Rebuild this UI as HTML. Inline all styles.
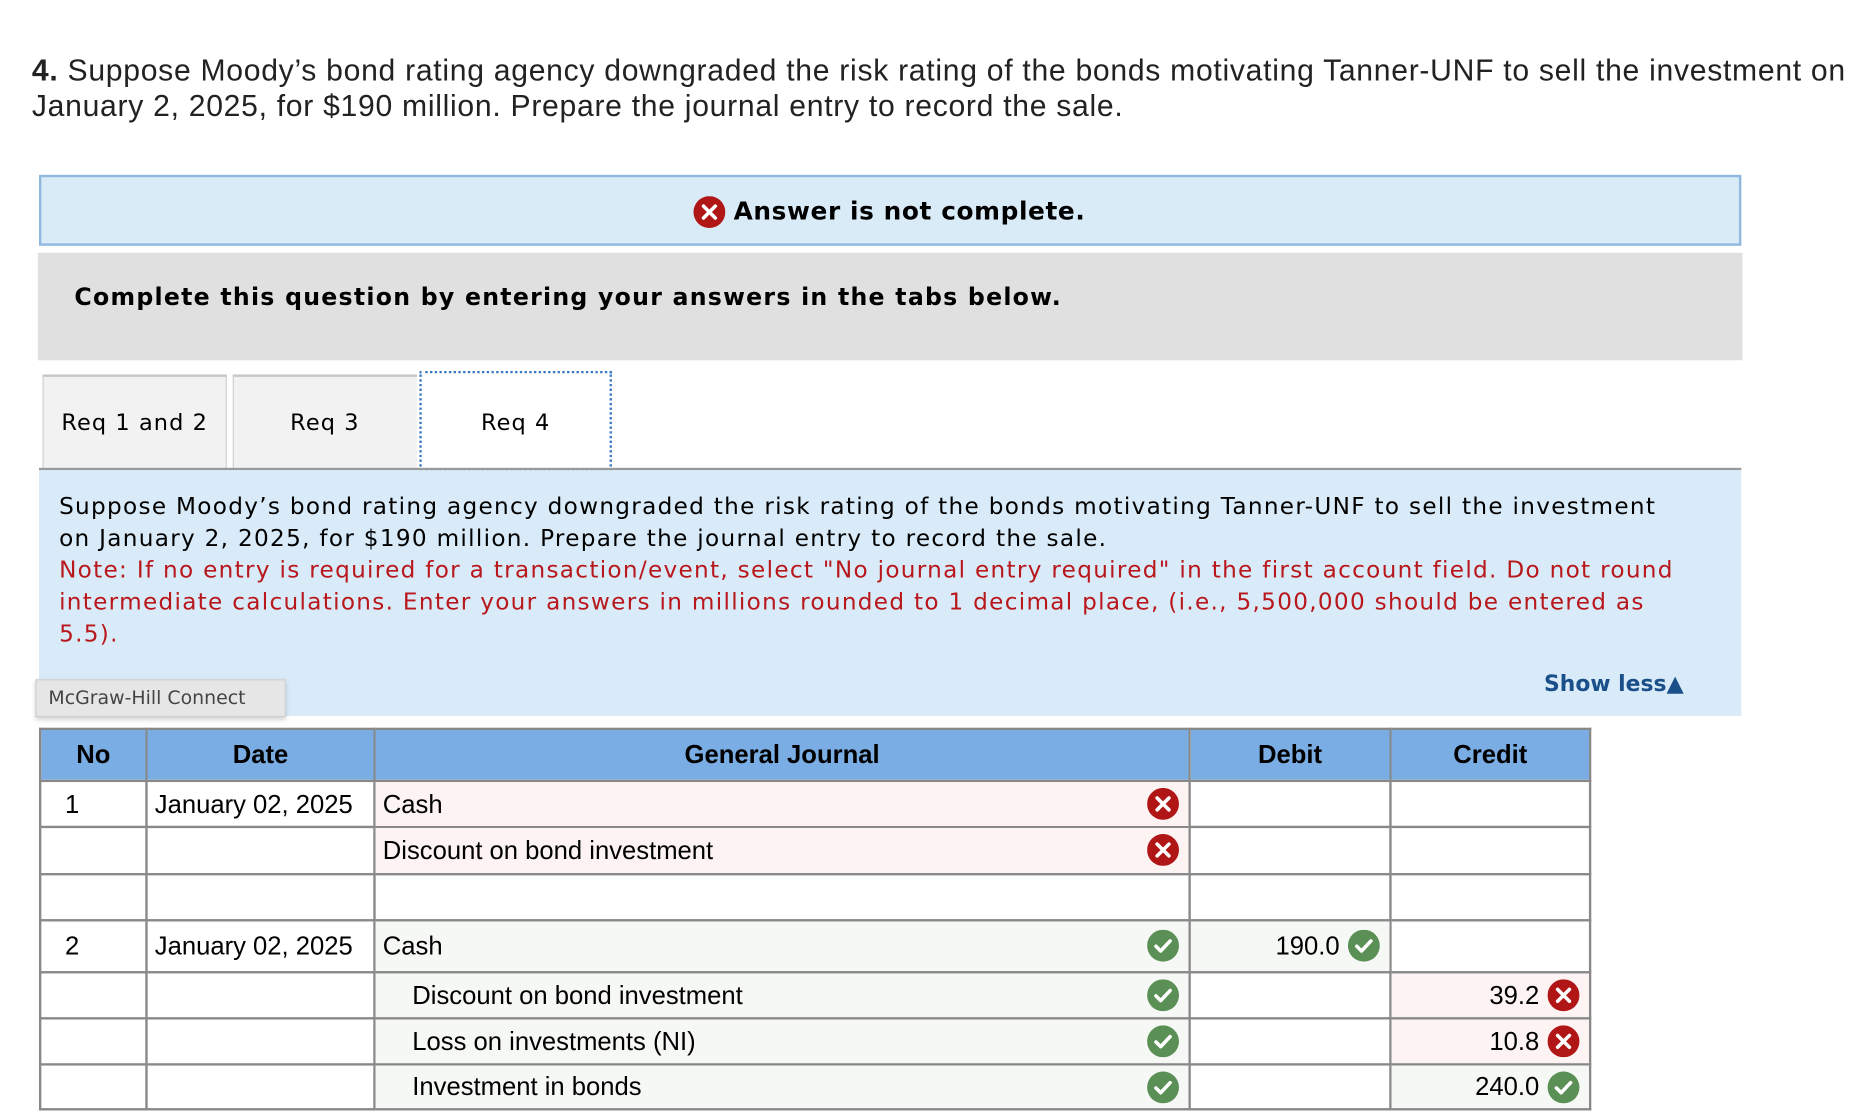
<!DOCTYPE html>
<html><head><meta charset="utf-8">
<style>
html,body{margin:0;padding:0;background:#fff;width:1850px;height:1114px;overflow:hidden}
#w{position:absolute;left:0;top:0;width:1566px;height:943px;transform:scale(1.18135);transform-origin:0 0}
.a{position:absolute;white-space:nowrap}
.v{font-family:"DejaVu Sans",Verdana,sans-serif}
.l{font-family:"Liberation Sans",Arial,sans-serif}
.ic{position:absolute;width:27px;height:27px}
table{position:absolute;left:33px;top:616px;border-collapse:collapse;table-layout:fixed;width:1312px;font-family:"Liberation Sans",Arial,sans-serif;font-size:21.7px;color:#000}
td,th{border:2px solid #888;padding:0 6px;position:relative;box-sizing:border-box;overflow:visible;white-space:nowrap}
th{background:#7aade3;font-weight:bold;text-align:center}
.p{background:#fdf3f3}.g{background:#f6f8f5}
.n{padding-left:20px}
</style></head><body><div id="w">
<div class="a l" style="left:27px;top:45px;font-size:25.5px;letter-spacing:0.6px;line-height:30px;color:#222"><b>4.</b> Suppose Moody’s bond rating agency downgraded the risk rating of the bonds motivating Tanner-UNF to sell the investment on<br>January 2, 2025, for $190 million. Prepare the journal entry to record the sale.</div>

<div class="a" style="left:33px;top:148px;width:1437px;height:56px;background:#daebf8;border:2px solid #8fb8de"></div>
<svg class="ic" style="left:587px;top:166px" viewBox="0 0 27 27"><circle cx="13.5" cy="13.5" r="13.5" fill="#b11616"/><path d="M8.5 8.5l10 10M18.5 8.5l-10 10" stroke="#fff" stroke-width="3" stroke-linecap="round"/></svg>
<div class="a v" style="left:621px;top:164px;font-size:21px;letter-spacing:0.5px;font-weight:bold;line-height:30px;color:#000">Answer is not complete.</div>

<div class="a" style="left:32px;top:214px;width:1443px;height:91px;background:#e0e0e0"></div>
<div class="a v" style="left:63px;top:237px;font-size:20px;letter-spacing:1.05px;font-weight:bold;line-height:28px;color:#000">Complete this question by entering your answers in the tabs below.</div>

<div class="a" style="left:36px;top:317px;width:156px;height:80px;background:#f2f2f2;border-top:2px solid #c6c6c6;border-left:1px solid #d0d0d0;border-right:1px solid #d0d0d0;box-sizing:border-box"></div>
<div class="a v" style="left:36px;top:344px;width:156px;text-align:center;font-size:19px;letter-spacing:0.9px;line-height:28px">Req 1 and 2</div>
<div class="a" style="left:197px;top:317px;width:156px;height:80px;background:#f2f2f2;border-top:2px solid #c6c6c6;border-left:1px solid #d0d0d0;box-sizing:border-box"></div>
<div class="a v" style="left:197px;top:344px;width:156px;text-align:center;font-size:19px;letter-spacing:0.9px;line-height:28px">Req 3</div>
<div class="a" style="left:355px;top:314px;width:163px;height:85px;background:#fff;border:2px dotted #3a78c4;box-sizing:border-box"></div>
<div class="a v" style="left:355px;top:344px;width:163px;text-align:center;font-size:19px;letter-spacing:0.9px;line-height:28px">Req 4</div>

<div class="a" style="left:33px;top:396px;width:1441px;height:2px;background:#999"></div>
<div class="a" style="left:33px;top:398px;width:1441px;height:208px;background:#d9ebf8"></div>
<div class="a v" style="left:50px;top:415px;font-size:19.6px;letter-spacing:1.1px;line-height:27px;color:#000">Suppose Moody’s bond rating agency downgraded the risk rating of the bonds motivating Tanner-UNF to sell the investment<br>on January 2, 2025, for $190 million. Prepare the journal entry to record the sale.<br><span style="color:#b8171c">Note: If no entry is required for a transaction/event, select "No journal entry required" in the first account field. Do not round<br>intermediate calculations. Enter your answers in millions rounded to 1 decimal place, (i.e., 5,500,000 should be entered as<br>5.5).</span></div>
<div class="a v" style="left:1307px;top:566px;font-size:18.5px;font-weight:bold;color:#1b4f8a;line-height:26px">Show less<span style="font-size:19px">▲</span></div>

<div class="a v" style="left:30px;top:575px;width:212px;height:32px;background:#e6e6e6;border:1px solid #cfcfcf;box-sizing:border-box;box-shadow:0 2px 4px rgba(0,0,0,.2);font-size:16px;color:#444;line-height:30px;padding-left:10px">McGraw-Hill Connect</div>

<table>
<colgroup><col style="width:90px"><col style="width:193px"><col style="width:690px"><col style="width:170px"><col style="width:169px"></colgroup>
<tr style="height:44px"><th>No</th><th>Date</th><th>General Journal</th><th>Debit</th><th>Credit</th></tr>
<tr style="height:39px"><td class="n">1</td><td>January 02, 2025</td><td class="p">Cash<svg class="ic" style="right:8px;top:5px" viewBox="0 0 27 27"><circle cx="13.5" cy="13.5" r="13.5" fill="#b11616"/><path d="M8.5 8.5l10 10M18.5 8.5l-10 10" stroke="#fff" stroke-width="3" stroke-linecap="round"/></svg></td><td></td><td></td></tr>
<tr style="height:40px"><td></td><td></td><td class="p">Discount on bond investment<svg class="ic" style="right:8px;top:5px" viewBox="0 0 27 27"><circle cx="13.5" cy="13.5" r="13.5" fill="#b11616"/><path d="M8.5 8.5l10 10M18.5 8.5l-10 10" stroke="#fff" stroke-width="3" stroke-linecap="round"/></svg></td><td></td><td></td></tr>
<tr style="height:39px"><td></td><td></td><td></td><td></td><td></td></tr>
<tr style="height:44px"><td class="n">2</td><td>January 02, 2025</td><td class="g">Cash<svg class="ic" style="right:8px;top:7px" viewBox="0 0 27 27"><circle cx="13.5" cy="13.5" r="13.5" fill="#5a8f55"/><path d="M7.5 14l4 4 8-8.5" stroke="#fff" stroke-width="3" fill="none" stroke-linecap="round" stroke-linejoin="round"/></svg></td><td class="g" style="text-align:right;padding-right:42px">190.0<svg class="ic" style="right:8px;top:7px" viewBox="0 0 27 27"><circle cx="13.5" cy="13.5" r="13.5" fill="#5a8f55"/><path d="M7.5 14l4 4 8-8.5" stroke="#fff" stroke-width="3" fill="none" stroke-linecap="round" stroke-linejoin="round"/></svg></td><td></td></tr>
<tr style="height:39px"><td></td><td></td><td class="g" style="padding-left:31px">Discount on bond investment<svg class="ic" style="right:8px;top:5px" viewBox="0 0 27 27"><circle cx="13.5" cy="13.5" r="13.5" fill="#5a8f55"/><path d="M7.5 14l4 4 8-8.5" stroke="#fff" stroke-width="3" fill="none" stroke-linecap="round" stroke-linejoin="round"/></svg></td><td></td><td class="p" style="text-align:right;padding-right:42px">39.2<svg class="ic" style="right:8px;top:5px" viewBox="0 0 27 27"><circle cx="13.5" cy="13.5" r="13.5" fill="#b11616"/><path d="M8.5 8.5l10 10M18.5 8.5l-10 10" stroke="#fff" stroke-width="3" stroke-linecap="round"/></svg></td></tr>
<tr style="height:39px"><td></td><td></td><td class="g" style="padding-left:31px">Loss on investments (NI)<svg class="ic" style="right:8px;top:5px" viewBox="0 0 27 27"><circle cx="13.5" cy="13.5" r="13.5" fill="#5a8f55"/><path d="M7.5 14l4 4 8-8.5" stroke="#fff" stroke-width="3" fill="none" stroke-linecap="round" stroke-linejoin="round"/></svg></td><td></td><td class="p" style="text-align:right;padding-right:42px">10.8<svg class="ic" style="right:8px;top:5px" viewBox="0 0 27 27"><circle cx="13.5" cy="13.5" r="13.5" fill="#b11616"/><path d="M8.5 8.5l10 10M18.5 8.5l-10 10" stroke="#fff" stroke-width="3" stroke-linecap="round"/></svg></td></tr>
<tr style="height:38px"><td></td><td></td><td class="g" style="padding-left:31px">Investment in bonds<svg class="ic" style="right:8px;top:5px" viewBox="0 0 27 27"><circle cx="13.5" cy="13.5" r="13.5" fill="#5a8f55"/><path d="M7.5 14l4 4 8-8.5" stroke="#fff" stroke-width="3" fill="none" stroke-linecap="round" stroke-linejoin="round"/></svg></td><td></td><td class="g" style="text-align:right;padding-right:42px">240.0<svg class="ic" style="right:8px;top:5px" viewBox="0 0 27 27"><circle cx="13.5" cy="13.5" r="13.5" fill="#5a8f55"/><path d="M7.5 14l4 4 8-8.5" stroke="#fff" stroke-width="3" fill="none" stroke-linecap="round" stroke-linejoin="round"/></svg></td></tr>
</table>
</div></body></html>
